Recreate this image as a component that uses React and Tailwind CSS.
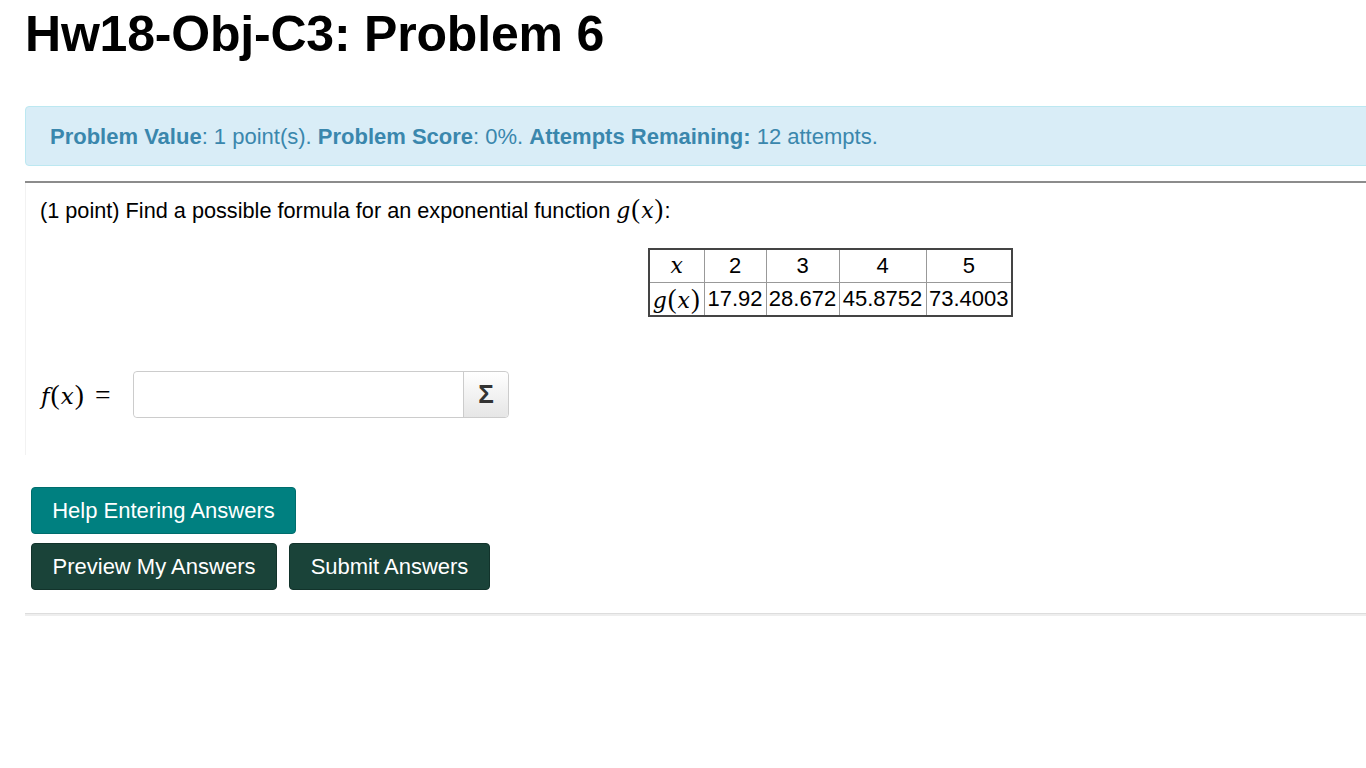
import React from 'react';

const mathFont = { fontFamily: '"DejaVu Serif", "Liberation Serif", serif' };

const MathG = ({ size = 'text-[22px]' }) => (
  <span style={mathFont} className={`${size} whitespace-nowrap`}>
    <i>g</i>
    <span className="font-['Liberation_Serif',serif] text-[1.2em] mx-[1px]">(</span>
    <i>x</i>
    <span className="font-['Liberation_Serif',serif] text-[1.2em] mx-[1px]">)</span>
  </span>
);

const cols = [
  { x: '2', g: '17.92', w: 'w-[62px]' },
  { x: '3', g: '28.672', w: 'w-[73px]' },
  { x: '4', g: '45.8752', w: 'w-[87px]' },
  { x: '5', g: '73.4003', w: 'w-[86px]' },
];

export default function App() {
  return (
    <div className="min-h-[768px] w-[1366px] overflow-hidden bg-white text-black font-['Liberation_Sans',Arial,sans-serif]">
      <div className="w-[1400px] pl-[25px]">
        <h1 className="pt-[6px] text-[50px] font-bold leading-[56px] tracking-[-0.2px]">Hw18-Obj-C3: Problem 6</h1>

        <div className="mt-[44px] h-[60px] rounded-[4px] border border-[#bce8f1] bg-[#d9edf7] pl-[24px] flex items-center text-[22px] text-[#3a87ad]">
          <span>
            <b>Problem Value</b>: 1 point(s). <b>Problem Score</b>: 0%. <b>Attempts Remaining:</b> 12 attempts.
          </span>
        </div>

        <div className="mt-[15px] border-t-2 border-[#8c8c8c]">
          <div className="border-l border-[#f2f2f2] pl-[14px] pt-[11px] pb-[37px]">
            <p className="text-[21.7px] leading-[30px]">
              (1 point) Find a possible formula for an exponential function <MathG />:
            </p>

            <table className="ml-[608px] mt-[22px] border-collapse border-2 border-[#444] text-[22px] leading-none">
              <tbody>
                <tr className="h-[33px]">
                  <td className="w-[55px] border border-[#999] p-0 text-center" style={mathFont}>
                    <i className="text-[22px]">x</i>
                  </td>
                  {cols.map((c) => (
                    <td key={c.x} className={`${c.w} border border-[#999] p-0 text-center`}>
                      {c.x}
                    </td>
                  ))}
                </tr>
                <tr className="h-[34px]">
                  <td className="border border-[#999] p-0 text-center">
                    <MathG />
                  </td>
                  {cols.map((c) => (
                    <td key={c.g} className="border border-[#999] p-0 text-center">
                      {c.g}
                    </td>
                  ))}
                </tr>
              </tbody>
            </table>

            <div className="mt-[54px] flex items-center">
              <span style={mathFont} className="w-[93px] pl-px text-[23px] whitespace-nowrap">
                <i>f</i>
                <span className="font-['Liberation_Serif',serif] text-[1.2em] mx-[1px]">(</span>
                <i>x</i>
                <span className="font-['Liberation_Serif',serif] text-[1.2em] mx-[1px]">)</span>
                <span className="ml-[10px] font-['Liberation_Serif',serif] text-[1.2em]">=</span>
              </span>
              <div className="flex h-[47px] w-[376px] rounded-[4px] border border-[#ccc] shadow-[inset_0_1px_1px_rgba(0,0,0,0.075)]">
                <div className="flex-1 rounded-l-[4px] bg-white" />
                <div className="flex w-[45px] items-center justify-center rounded-r-[4px] border-l border-[#ccc] bg-gradient-to-b from-white to-[#e6e6e6] text-[26px] font-bold text-[#333]">
                  Σ
                </div>
              </div>
            </div>
          </div>
        </div>

        <div className="mt-[32px] flex flex-col gap-[9px] pl-[6px]">
          <div>
            <button className="h-[47px] w-[265px] rounded-[4px] border border-[#006d6d] bg-[#008080] text-[22px] text-white">
              Help Entering Answers
            </button>
          </div>
          <div className="flex gap-[12px]">
            <button className="h-[47px] w-[246px] rounded-[4px] border border-[#12332b] bg-[#1a4339] text-[22px] text-white">
              Preview My Answers
            </button>
            <button className="h-[47px] w-[201px] rounded-[4px] border border-[#12332b] bg-[#1a4339] text-[22px] text-white">
              Submit Answers
            </button>
          </div>
        </div>

        <div className="mt-[23px] h-[3px] border-t border-[#ddd] bg-[#eee]" />
      </div>
    </div>
  );
}
